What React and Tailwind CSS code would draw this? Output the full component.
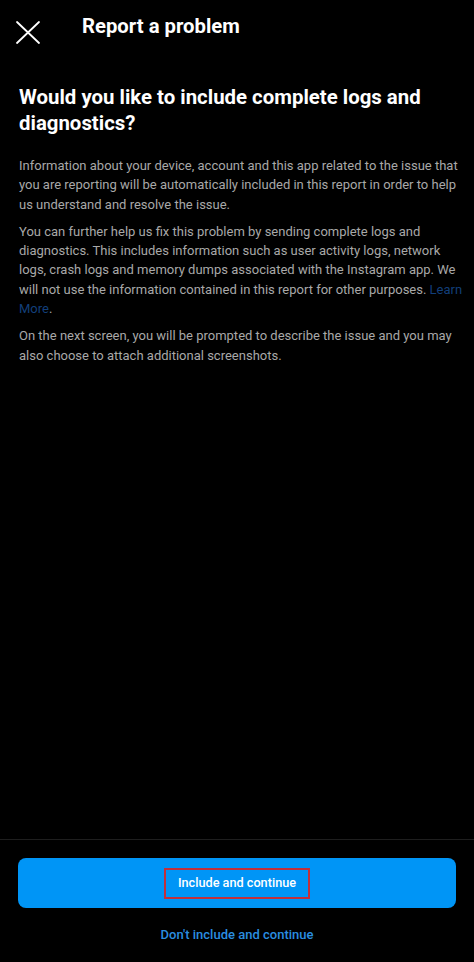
import React from "react";

const CloseIcon = () => (
  <svg width="24" height="23" viewBox="0 0 24 23" fill="none" stroke="white" strokeWidth="1.8" strokeLinecap="round">
    <path d="M1 1L23 22M23 1L1 22" />
  </svg>
);

export default function App() {
  return (
    <div className="flex flex-col h-[962px] w-full bg-black text-white font-['Roboto',sans-serif]">
      {/* Header */}
      <div className="flex items-start h-[56px] pl-4">
        <div className="mt-[21px]">
          <CloseIcon />
        </div>
        <h1 className="ml-[42px] mt-[14px] text-[20.3px] font-bold leading-[24px]">Report a problem</h1>
      </div>

      {/* Body */}
      <div className="pl-[19px] pr-[10px] pt-[28px]">
        <h2 className="text-[20.4px] font-bold leading-[26px] pr-[8px]">
          Would you like to include complete logs and diagnostics?
        </h2>
        <div className="mt-[20px] space-y-[8px] text-[13px] leading-[19.3px] text-[#a8a8a8]">
          <p>
            Information about your device, account and this app related to the issue that you are
            reporting will be automatically included in this report in order to help us understand
            and resolve the issue.
          </p>
          <p>
            You can further help us fix this problem by sending complete logs and diagnostics. This
            includes information such as user activity logs, network logs, crash logs and memory
            dumps associated with the Instagram app. We will not use the information contained in
            this report for other purposes. <span className="text-[#123f7a]">Learn More</span>.
          </p>
          <p>
            On the next screen, you will be prompted to describe the issue and you may also choose
            to attach additional screenshots.
          </p>
        </div>
      </div>

      <div className="flex-1" />

      {/* Footer */}
      <div className="border-t border-[#1e1e1e] px-[18px] pt-[18px]">
        <button className="flex items-center justify-center w-full h-[50px] rounded-[8px] bg-[#0095f6]">
          <span className="border-2 border-[#c2303c] h-[31px] px-[12px] flex items-center text-[12.7px] font-medium text-white">
            Include and continue
          </span>
        </button>
        <div className="h-[54px] flex items-center justify-center text-[13px] font-medium text-[#2a8ee0]">
          Don't include and continue
        </div>
      </div>
    </div>
  );
}
